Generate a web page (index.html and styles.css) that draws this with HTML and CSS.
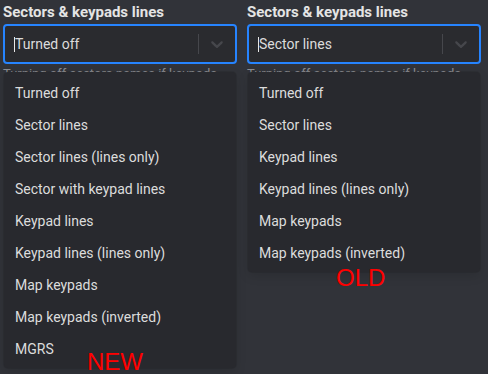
FILE: index.html
```html
<!DOCTYPE html>
<html>
<head>
<meta charset="utf-8">
<link rel="stylesheet" href="styles.css">
</head>
<body>
<div class="page">
  <div class="field">
    <div class="label">Sectors &amp; keypads lines</div>
    <div class="select">
      <div class="value"><span class="caret"></span>Turned off</div>
      <span class="sep"></span>
      <span class="indicator"><svg viewBox="0 0 20 20" width="20" height="20"><path d="M4.516 7.548c0.436-0.446 1.043-0.481 1.576 0l3.908 3.747 3.908-3.747c0.533-0.481 1.141-0.446 1.574 0 0.436 0.445 0.408 1.197 0 1.615-0.406 0.418-4.695 4.502-4.695 4.502-0.217 0.223-0.502 0.335-0.787 0.335s-0.57-0.112-0.789-0.335c0 0-4.287-4.084-4.695-4.502s-0.436-1.17 0-1.615z"/></svg></span>
    </div>
    <div class="help">Turning off sectors names if keypads</div>
    <ul class="menu">
      <li>Turned off</li>
      <li>Sector lines</li>
      <li>Sector lines (lines only)</li>
      <li>Sector with keypad lines</li>
      <li>Keypad lines</li>
      <li>Keypad lines (lines only)</li>
      <li>Map keypads</li>
      <li>Map keypads (inverted)</li>
      <li>MGRS</li>
    </ul>
    <span class="tag tag-new">NEW</span>
  </div>
  <div class="field">
    <div class="label">Sectors &amp; keypads lines</div>
    <div class="select">
      <div class="value"><span class="caret"></span>Sector lines</div>
      <span class="sep"></span>
      <span class="indicator"><svg viewBox="0 0 20 20" width="20" height="20"><path d="M4.516 7.548c0.436-0.446 1.043-0.481 1.576 0l3.908 3.747 3.908-3.747c0.533-0.481 1.141-0.446 1.574 0 0.436 0.445 0.408 1.197 0 1.615-0.406 0.418-4.695 4.502-4.695 4.502-0.217 0.223-0.502 0.335-0.787 0.335s-0.57-0.112-0.789-0.335c0 0-4.287-4.084-4.695-4.502s-0.436-1.17 0-1.615z"/></svg></span>
    </div>
    <div class="help">Turning off sectors names if keypads</div>
    <ul class="menu">
      <li>Turned off</li>
      <li>Sector lines</li>
      <li>Keypad lines</li>
      <li>Keypad lines (lines only)</li>
      <li>Map keypads</li>
      <li>Map keypads (inverted)</li>
    </ul>
    <span class="tag tag-old">OLD</span>
  </div>
</div>
</body>
</html>
```
FILE: styles.css
```css
html, body {
  margin: 0;
  padding: 0;
  background: #313339;
  height: 100%;
  overflow: hidden;
}
body {
  font-family: Roboto, "Noto Sans", sans-serif;
  color: #dedede;
}
.page {
  display: grid;
  grid-template-columns: 234px 234px;
  column-gap: 10px;
  padding: 3px 0 0 3px;
}
.field {
  position: relative;
  display: flex;
  flex-direction: column;
}
.label {
  font-size: 15px;
  font-weight: 700;
  line-height: 18px;
  color: #e4e4e4;
  margin-bottom: 3px;
}
.select {
  height: 40px;
  box-sizing: border-box;
  border: 2px solid #2684ff;
  border-radius: 4px;
  background: #2a2b2f;
  display: flex;
  align-items: center;
}
.value {
  flex: 1;
  display: flex;
  align-items: center;
  padding-left: 9px;
  font-size: 14px;
  color: #dcdcdc;
}
.caret {
  width: 1px;
  height: 15px;
  background: #e8e8e8;
}
.sep {
  align-self: stretch;
  width: 1px;
  margin: 8px 0;
  background: #46474c;
}
.indicator {
  display: flex;
  padding: 8px;
}
.indicator svg {
  fill: #46474c;
}
.help {
  margin-top: 2px;
  font-size: 13px;
  line-height: 15px;
  color: #8c8d92;
}
.menu {
  position: absolute;
  top: 69px;
  left: 1px;
  right: 1px;
  margin: 0;
  padding: 5px 0 3px;
  list-style: none;
  background: #28292e;
  border-radius: 4px;
  box-shadow: 0 0 0 1px rgba(0, 0, 0, 0.08), 0 4px 11px rgba(0, 0, 0, 0.12);
}
.menu li {
  height: 32px;
  line-height: 32px;
  padding-left: 11px;
  font-size: 14px;
  color: #dcdcdc;
}
.tag {
  position: absolute;
  font-family: "Liberation Sans", Arial, sans-serif;
  font-size: 24px;
  line-height: 24px;
  color: #ff0000;
}
.tag-new {
  left: 84px;
  top: 347px;
}
.tag-old {
  left: 89px;
  top: 263px;
}
```
